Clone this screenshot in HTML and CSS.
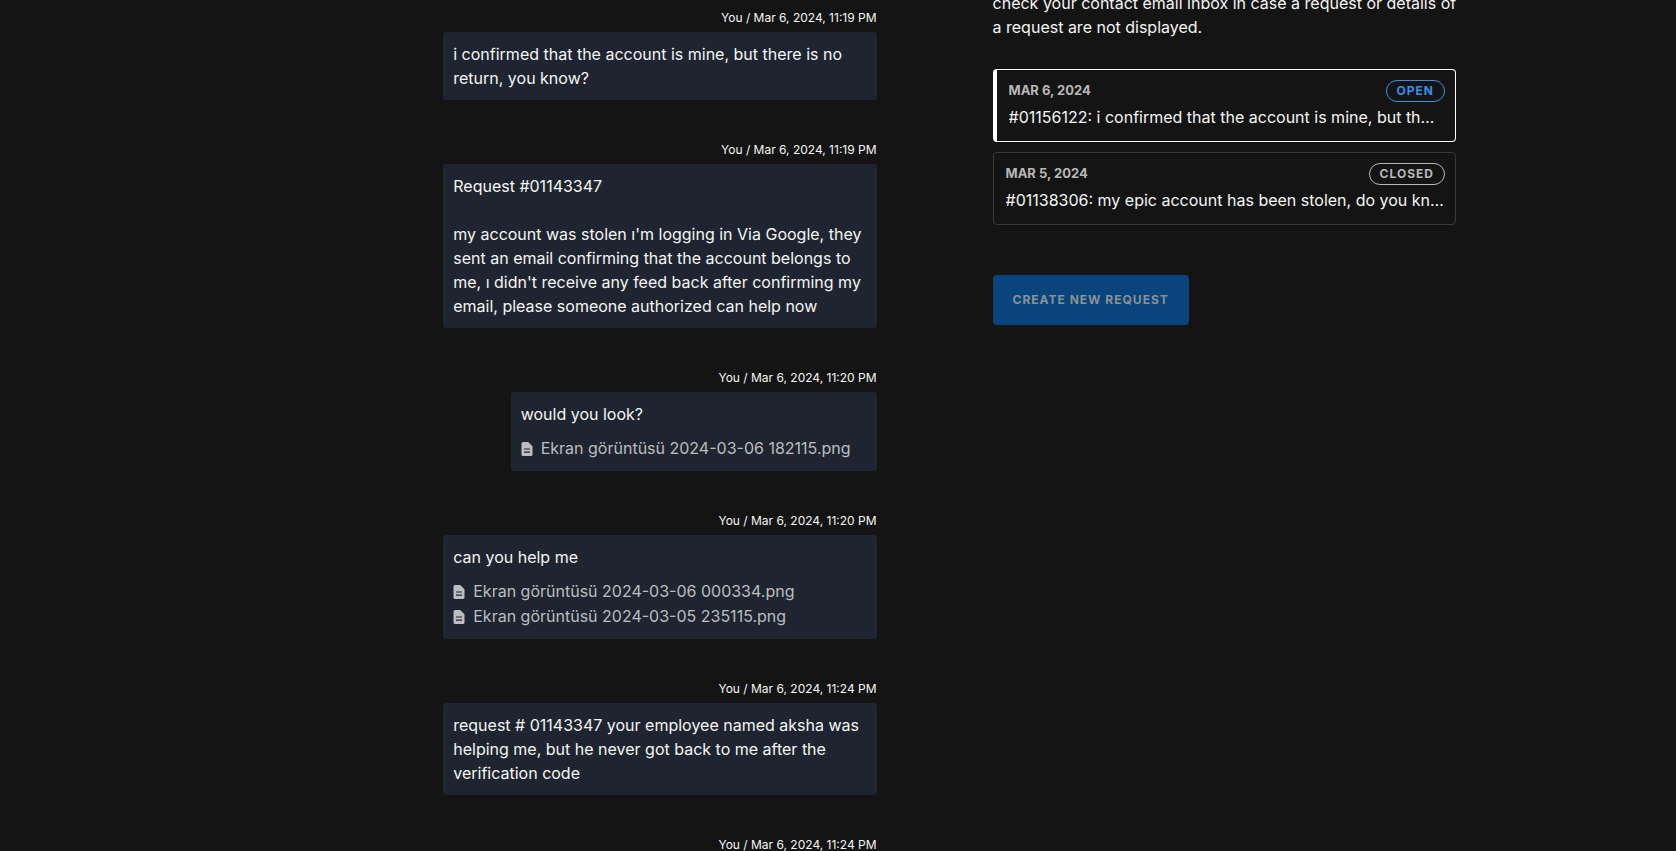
FILE: index.html
```
<!DOCTYPE html>
<html lang="en">
<head>
    <title>Support requests</title>
    <meta charset="utf-8">
    <meta name="viewport" content="width=device-width, initial-scale=1">
    <link rel="stylesheet" href="styles.css">
</head>
<body>
    <!-- file icon, shared by all attachments -->
    <svg class="sprite" aria-hidden="true">
        <symbol id="file" viewBox="0 0 12 14">
            <path fill="currentColor" fill-rule="evenodd" d="M2 0H7.2L11.5 4.2V12.5A1.5 1.5 0 0 1 10 14H2A1.5 1.5 0 0 1 .5 12.5V1.5A1.5 1.5 0 0 1 2 0ZM3 6.4V7.6H9V6.4ZM3 9.6V10.8H9V9.6Z"/>
        </symbol>
    </svg>

    <main class="page">
        <section class="thread">
            <article class="message">
                <div class="meta">You / Mar 6, 2024, 11:19 PM</div>
                <div class="bubble">
                    <p>i confirmed that the account is mine, but there is no return, you know?</p>
                </div>
            </article>
            <article class="message">
                <div class="meta">You / Mar 6, 2024, 11:19 PM</div>
                <div class="bubble">
                    <p>Request #01143347<br><br>my account was stolen ı'm logging in Via Google, they sent an email confirming that the account belongs to me, ı didn't receive any feed back after confirming my email, please someone authorized can help now</p>
                </div>
            </article>
            <article class="message">
                <div class="meta">You / Mar 6, 2024, 11:20 PM</div>
                <div class="bubble">
                    <p>would you look?</p>
                    <div class="files">
                        <a class="file" href="#"><svg class="icon"><use href="#file"/></svg>Ekran görüntüsü 2024-03-06 182115.png</a>
                    </div>
                </div>
            </article>
            <article class="message">
                <div class="meta">You / Mar 6, 2024, 11:20 PM</div>
                <div class="bubble wide">
                    <p>can you help me</p>
                    <div class="files">
                        <a class="file" href="#"><svg class="icon"><use href="#file"/></svg>Ekran görüntüsü 2024-03-06 000334.png</a>
                        <a class="file" href="#"><svg class="icon"><use href="#file"/></svg>Ekran görüntüsü 2024-03-05 235115.png</a>
                    </div>
                </div>
            </article>
            <article class="message">
                <div class="meta">You / Mar 6, 2024, 11:24 PM</div>
                <div class="bubble">
                    <p>request # 01143347 your employee named aksha was helping me, but he never got back to me after the verification code</p>
                </div>
            </article>
            <article class="message">
                <div class="meta">You / Mar 6, 2024, 11:24 PM</div>
            </article>
        </section>

        <aside class="requests">
            <p class="note">check your contact email inbox in case a request or details of a request are not displayed.</p>
            <a class="request active" href="#">
                <span class="top"><span class="date">Mar 6, 2024</span><span class="status open">Open</span></span>
                <span class="title">#01156122: i confirmed that the account is mine, but th…</span>
            </a>
            <a class="request" href="#">
                <span class="top"><span class="date">Mar 5, 2024</span><span class="status">Closed</span></span>
                <span class="title">#01138306: my epic account has been stolen, do you kn…</span>
            </a>
            <button class="create" type="button">Create new request</button>
        </aside>
    </main>
</body>
</html>
```
FILE: styles.css
```
*{box-sizing:border-box;}
body{margin:0;background-color:#141414;color:#f5f5f5;font-family:Inter, "Liberation Sans", sans-serif;font-size:16px;line-height:24px;}
p{margin:0;}
a{color:inherit;text-decoration:none;}
.sprite{display:none;}

.page{display:grid;grid-template-columns:17fr 12fr;column-gap:116px;max-width:1236px;height:100vh;margin:0 auto;overflow:hidden;}

/* conversation */
.thread{padding-top:8px;}
.message{display:flex;flex-direction:column;align-items:flex-end;margin-bottom:40px;}
.meta{margin-bottom:4px;font-size:12px;line-height:20px;}
.bubble{max-width:66%;padding:10px;border-radius:3px;background-color:#1f2530;}
.wide{width:66%;}
.files{margin-top:10px;}
.file{display:flex;align-items:center;gap:8px;margin-right:16px;line-height:25px;color:#bbbdc1;}
.file:hover{color:#fff;}
.icon{flex:none;width:12px;height:14px;}

/* request list */
.requests{min-width:0;margin-top:-9px;}
.note{margin:0 -4px 30px 0;}
.request{display:block;margin-bottom:10px;padding:10px 10px 12px 12px;border:1px solid #3a3a3a;border-radius:4px;}
.active{border-color:#fff;border-left-width:4px;}
.top{display:flex;justify-content:space-between;margin-bottom:3px;font-size:12px;font-weight:700;line-height:20px;text-transform:uppercase;color:#b8b8b8;}
.date{font-size:13px;}
.status{padding:0 10px;border:1px solid currentColor;border-radius:11px;letter-spacing:1px;}
.open{color:#3b8eea;}
.title{display:block;overflow:hidden;white-space:nowrap;text-overflow:ellipsis;}
.create{margin-top:40px;padding:15px 20px;border:0;border-radius:4px;background-color:#09447c;color:#8a9197;font:700 12px/20px Inter, "Liberation Sans", sans-serif;letter-spacing:1px;text-transform:uppercase;cursor:pointer;}
```
